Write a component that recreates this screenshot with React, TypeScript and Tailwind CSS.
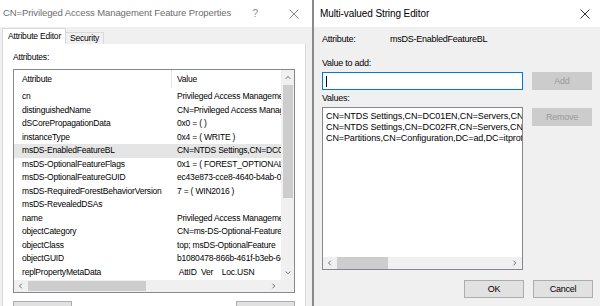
import React from "react";

const ui = "font-['Liberation_Sans',Arial,sans-serif]";

const attributes: [string, string][] = [
  ["cn", "Privileged Access Management Feature"],
  ["distinguishedName", "CN=Privileged Access Management Feature,CN=Optional Features"],
  ["dSCorePropagationData", "0x0 = ( )"],
  ["instanceType", "0x4 = ( WRITE )"],
  ["msDS-EnabledFeatureBL", "CN=NTDS Settings,CN=DC01EN,CN=Servers"],
  ["msDS-OptionalFeatureFlags", "0x1 = ( FOREST_OPTIONAL_FEATURE )"],
  ["msDS-OptionalFeatureGUID", "ec43e873-cce8-4640-b4ab-07ffe4ab5bcd"],
  ["msDS-RequiredForestBehaviorVersion", "7 = ( WIN2016 )"],
  ["msDS-RevealedDSAs", ""],
  ["name", "Privileged Access Management Feature"],
  ["objectCategory", "CN=ms-DS-Optional-Feature,CN=Schema"],
  ["objectClass", "top; msDS-OptionalFeature"],
  ["objectGUID", "b1080478-866b-461f-b3eb-6c0a1a7e7b12"],
  ["replPropertyMetaData", " AttID  Ver    Loc.USN"],
];

const values = [
  "CN=NTDS Settings,CN=DC01EN,CN=Servers,CN=Default-First-Site-Name",
  "CN=NTDS Settings,CN=DC02FR,CN=Servers,CN=Default-First-Site-Name",
  "CN=Partitions,CN=Configuration,DC=ad,DC=itprotoday,DC=com",
];

function CloseIcon({ color = "#444" }: { color?: string }) {
  return (
    <svg width="10" height="10" viewBox="0 0 10 10">
      <path d="M0.5 0.5 L9.5 9.5 M9.5 0.5 L0.5 9.5" stroke={color} strokeWidth="1" />
    </svg>
  );
}

function Chevron({ dir }: { dir: "up" | "down" | "left" | "right" }) {
  const d = {
    up: "M1 5 L4 2 L7 5",
    down: "M1 2 L4 5 L7 2",
    left: "M5 1 L2 4 L5 7",
    right: "M2 1 L5 4 L2 7",
  }[dir];
  return (
    <svg width="6" height="6" viewBox="0 0 8 8">
      <path d={d} stroke="#606060" strokeWidth="1.2" fill="none" />
    </svg>
  );
}

function PropertiesWindow() {
  return (
    <div className="w-[312px] h-full flex flex-col bg-[#f0f0f0] overflow-hidden">
      <div className="h-[27px] shrink-0 bg-white flex items-center pl-[3px] pr-[13px]">
        <span className="text-[9.5px] tracking-[-0.1px] text-[#6d6d6d] whitespace-nowrap">
          CN=Privileged Access Management Feature Properties
        </span>
        <span className="ml-auto mr-[31px] text-[10px] text-[#8a8a8a]">?</span>
        <CloseIcon color="#8a8a8a" />
      </div>

      <div className="h-[16px] shrink-0 flex items-end pl-[2px] mt-[1px] text-[8.5px] tracking-[-0.2px] text-black">
        <div className="h-[16px] pl-[5px] pr-[4px] bg-white border border-b-0 border-[#d9d9d9] flex items-center">
          Attribute Editor
        </div>
        <div className="h-[12px] px-[4px] bg-[#f0f0f0] border border-l-0 border-b-0 border-[#d9d9d9] flex items-center">
          Security
        </div>
      </div>

      <div className="flex-1 ml-[2px] mr-[6px] bg-white border border-t-0 border-[#d9d9d9] flex flex-col px-[10px] text-[8.5px] tracking-[-0.2px] text-black">
        <div className="h-[25px] flex items-end pb-[5px]">Attributes:</div>

        <div className="h-[224px] border border-[#828790] flex flex-col">
          <div className="flex-1 flex min-h-0">
            <div className="flex-1 flex flex-col min-w-0">
              <div className="h-[18px] flex">
                <div className="w-[158px] pl-[8px] flex items-center border-r border-[#e5e5e5]">Attribute</div>
                <div className="flex-1 pl-[5px] flex items-center">Value</div>
              </div>
              <div className="h-[2px]" />
              {attributes.map(([name, value]) => (
                <div
                  key={name}
                  className={`h-[13.5px] flex items-center ${name === "msDS-EnabledFeatureBL" ? "bg-[#e5e5e5]" : ""}`}
                >
                  <div className="w-[158px] pl-[8px] whitespace-nowrap overflow-hidden">{name}</div>
                  <div className="flex-1 pl-[5px] whitespace-pre overflow-hidden">{value}</div>
                </div>
              ))}
            </div>
            <div className="w-[13px] bg-[#f0f0f0] flex flex-col items-center">
              <div className="h-[15px] flex items-center justify-center">
                <Chevron dir="up" />
              </div>
              <div className="w-[10px] h-[113px] bg-[#cdcdcd]" />
              <div className="flex-1" />
              <div className="h-[15px] flex items-center justify-center">
                <Chevron dir="down" />
              </div>
            </div>
          </div>
          <div className="h-[12px] flex bg-[#f0f0f0]">
            <div className="flex-1 flex items-center">
              <div className="w-[14px] flex justify-center">
                <Chevron dir="left" />
              </div>
              <div className="w-[118px] h-[10px] bg-[#cdcdcd]" />
              <div className="flex-1" />
              <div className="w-[14px] flex justify-center">
                <Chevron dir="right" />
              </div>
            </div>
            <div className="w-[13px] bg-[#f0f0f0]" />
          </div>
        </div>

        <div className="mt-[8px] flex justify-between">
          <div className="w-[59px] h-[18px] bg-[#e1e1e1] border border-[#adadad]" />
          <div className="w-[59px] h-[18px] bg-[#e1e1e1] border border-[#adadad]" />
        </div>
      </div>
    </div>
  );
}

function Button({ label, disabled }: { label: string; disabled?: boolean }) {
  return (
    <div
      className={`w-[60px] h-[18px] flex items-center justify-center text-[9px] border ${
        disabled ? "bg-[#cccccc] border-[#cccccc] text-[#9a9a9a]" : "bg-[#e1e1e1] border-[#adadad] text-black"
      }`}
    >
      {label}
    </div>
  );
}

function StringEditor() {
  return (
    <div className="flex-1 h-full flex flex-col bg-[#f0f0f0] border-l-[2px] border-double border-[#8a8a8a]">
      <div className="h-[27px] shrink-0 bg-white flex items-center pl-[6px] pr-[10px]">
        <span className="text-[10px] tracking-[-0.1px] text-black">Multi-valued String Editor</span>
        <span className="ml-auto">
          <CloseIcon color="#333" />
        </span>
      </div>

      <div className="flex-1 flex flex-col pl-[8px] text-[9px] tracking-[-0.25px] leading-[11px] text-black">
        <div className="h-[24px] flex items-center">
          <span className="w-[68px]">Attribute:</span>
          <span>msDS-EnabledFeatureBL</span>
        </div>
        <div className="h-[20px] flex items-end pb-[2px]">Value to add:</div>
        <div className="mt-[1px] flex gap-[9px]">
          <div className="w-[201px] h-[18px] bg-white border border-[#0078d7] flex items-center pl-[3px]">
            <div className="w-px h-[11px] bg-black" />
          </div>
          <Button label="Add" disabled />
        </div>
        <div className="h-[17px] flex items-center">Values:</div>
        <div className="flex gap-[9px]">
          <div className="w-[201px] h-[163px] bg-white border border-[#828790] flex flex-col">
            <div className="flex-1 pt-[3px] pl-[3px] overflow-hidden tracking-[-0.1px]">
              {values.map((v) => (
                <div key={v} className="whitespace-nowrap">{v}</div>
              ))}
            </div>
            <div className="h-[12px] bg-[#f0f0f0] flex items-center">
              <div className="w-[14px] flex justify-center">
                <Chevron dir="left" />
              </div>
              <div className="w-[51px] h-[12px] bg-[#cdcdcd]" />
              <div className="flex-1" />
              <div className="w-[14px] flex justify-center">
                <Chevron dir="right" />
              </div>
            </div>
          </div>
          <div className="mt-[1px]">
            <Button label="Remove" disabled />
          </div>
        </div>
        <div className="mt-[10px] flex gap-[9px] pl-[142px]">
          <Button label="OK" />
          <Button label="Cancel" />
        </div>
      </div>
    </div>
  );
}

export default function App() {
  return (
    <div className={`w-[600px] h-[306px] flex bg-white overflow-hidden ${ui}`}>
      <PropertiesWindow />
      <StringEditor />
    </div>
  );
}
